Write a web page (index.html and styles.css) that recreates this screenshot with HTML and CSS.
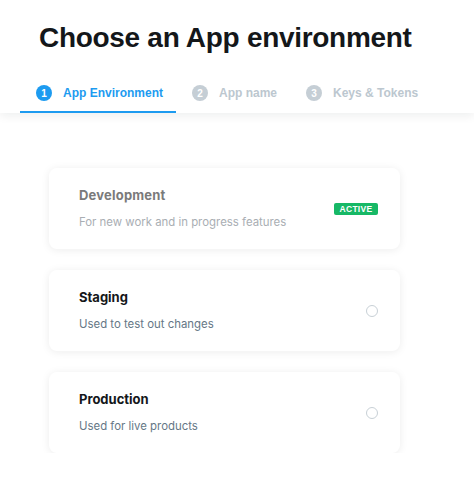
FILE: index.html
```html
<!DOCTYPE html>
<html lang="en">
<head>
<meta charset="utf-8">
<title>Choose an App environment</title>
<link rel="stylesheet" href="styles.css">
</head>
<body>
<header class="header">
  <h1 class="title">Choose an App environment</h1>
  <nav class="tabs">
    <div class="tab tab-active"><span class="num">1</span><span class="tab-label">App Environment</span></div>
    <div class="tab"><span class="num">2</span><span class="tab-label">App name</span></div>
    <div class="tab"><span class="num">3</span><span class="tab-label">Keys &amp; Tokens</span></div>
  </nav>
</header>
<main class="cards">
  <div class="card card-disabled">
    <div class="card-text">
      <div class="card-title">Development</div>
      <div class="card-desc">For new work and in progress features</div>
    </div>
    <span class="badge">ACTIVE</span>
  </div>
  <div class="card">
    <div class="card-text">
      <div class="card-title">Staging</div>
      <div class="card-desc">Used to test out changes</div>
    </div>
    <span class="radio"></span>
  </div>
  <div class="card">
    <div class="card-text">
      <div class="card-title">Production</div>
      <div class="card-desc">Used for live products</div>
    </div>
    <span class="radio"></span>
  </div>
</main>
</body>
</html>
```

FILE: styles.css
```css
html, body {
  margin: 0;
  padding: 0;
  background: #ffffff;
}
body {
  font-family: "Liberation Sans", Arial, sans-serif;
  color: #14171a;
}
.header {
  background: #ffffff;
  box-shadow: 0 3px 9px rgba(20, 23, 26, 0.07);
  padding-top: 21px;
}
.title {
  margin: 0 0 0 39px;
  font-size: 28px;
  line-height: 34px;
  font-weight: 700;
  letter-spacing: -0.3px;
  color: #14171a;
}
.tabs {
  display: flex;
  margin: 20px 0 0 20px;
}
.tab {
  display: flex;
  align-items: center;
  gap: 11px;
  height: 36px;
  padding: 0 13px 0 16px;
  border-bottom: 2px solid transparent;
  font-size: 12px;
  font-weight: 700;
  color: #bcc7cf;
}
.tab-active {
  color: #1d9bf0;
  border-bottom-color: #1d9bf0;
}
.num {
  width: 16px;
  height: 16px;
  border-radius: 50%;
  background: #c5ced5;
  color: #ffffff;
  font-size: 10px;
  font-weight: 700;
  display: flex;
  align-items: center;
  justify-content: center;
}
.tab-active .num {
  background: #1d9bf0;
}
.cards {
  display: flex;
  flex-direction: column;
  gap: 21px;
  width: 351px;
  margin: 55px 0 0 49px;
  font-family: Inter, "Noto Sans", sans-serif;
}
.card {
  display: flex;
  align-items: center;
  justify-content: space-between;
  padding: 19px 22px 19px 30px;
  background: #ffffff;
  border-radius: 8px;
  box-shadow: 0 1px 8px rgba(20, 23, 26, 0.08);
}
.card-title {
  font-size: 13px;
  line-height: 16px;
  font-weight: 700;
  color: #14171a;
}
.card-desc {
  margin-top: 11px;
  font-size: 11.4px;
  line-height: 16px;
  color: #657786;
}
.card-disabled .card-title {
  color: #7a7a7a;
  letter-spacing: 0.2px;
}
.card-disabled .card-desc {
  color: #a9aeb3;
}
.badge {
  background: #17b866;
  color: #ffffff;
  font-family: "Liberation Sans", Arial, sans-serif;
  font-size: 8.5px;
  font-weight: 700;
  letter-spacing: 0.3px;
  line-height: 12px;
  width: 44px;
  text-align: center;
  border-radius: 2px;
}
.radio {
  width: 10px;
  height: 10px;
  border: 1px solid #c8d0d6;
  border-radius: 50%;
}
```
